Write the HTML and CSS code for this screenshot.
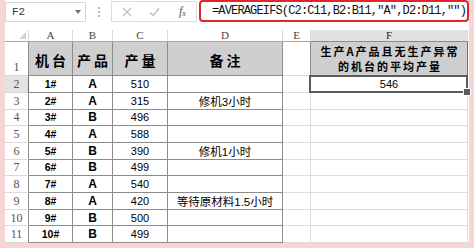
FILE: index.html
```html
<!DOCTYPE html>
<html lang="zh">
<head>
<meta charset="utf-8">
<title>AVERAGEIFS</title>
<link rel="stylesheet" href="styles.css">
</head>
<body>
<div class="app">
  <div class="fbar">
    <div class="namebox"><span class="nb-text">F2</span><span class="nb-arrow"></span></div>
    <div class="dots"><i></i><i></i><i></i></div>
    <div class="fbtns">
      <svg class="ic-x" width="10" height="10" viewBox="0 0 10 10"><path d="M1 1 L9 9 M9 1 L1 9" stroke="#bdbdbd" stroke-width="1.2" fill="none"/></svg>
      <svg class="ic-v" width="11" height="10" viewBox="0 0 11 10"><path d="M1 5.5 L4 8.5 L10 1.5" stroke="#bdbdbd" stroke-width="1.2" fill="none"/></svg>
      <span class="fx"><i>f</i><sub>x</sub></span>
    </div>
    <div class="formula">=AVERAGEIFS(C2:C11,B2:B11,"A",D2:D11,"")</div>
  </div>
  <div class="sheet">
    <div class="corner"><span class="tri"></span></div>
    <div class="ch">A</div><div class="ch">B</div><div class="ch">C</div><div class="ch">D</div><div class="ch">E</div><div class="ch sel">F</div><div class="ch end"></div>

    <div class="rh r1">1</div>
    <div class="c d hd title"><span>机台</span></div><div class="c d hd title"><span>产品</span></div><div class="c d hd title"><span>产量</span></div><div class="c d hd title"><span>备注</span></div>
    <div class="c pre"></div><div class="c fk hd ftitle">生产A产品且无生产异常<br>的机台的平均产量</div><div class="endc"></div>

    <div class="rh sel">2</div>
    <div class="c d mach">1#</div><div class="c d prod">A</div><div class="c d num">510</div><div class="c d note"></div>
    <div class="c pre"></div><div class="c fk num fsel">546</div><div class="endc"></div>

    <div class="rh">3</div>
    <div class="c d mach">2#</div><div class="c d prod">A</div><div class="c d num">315</div><div class="c d note">修机3小时</div>
    <div class="c"></div><div class="c"></div><div class="endc"></div>

    <div class="rh">4</div>
    <div class="c d mach">3#</div><div class="c d prod">B</div><div class="c d num">496</div><div class="c d note"></div>
    <div class="c"></div><div class="c"></div><div class="endc"></div>

    <div class="rh">5</div>
    <div class="c d mach">4#</div><div class="c d prod">A</div><div class="c d num">588</div><div class="c d note"></div>
    <div class="c"></div><div class="c"></div><div class="endc"></div>

    <div class="rh">6</div>
    <div class="c d mach">5#</div><div class="c d prod">B</div><div class="c d num">390</div><div class="c d note">修机1小时</div>
    <div class="c"></div><div class="c"></div><div class="endc"></div>

    <div class="rh">7</div>
    <div class="c d mach">6#</div><div class="c d prod">B</div><div class="c d num">499</div><div class="c d note"></div>
    <div class="c"></div><div class="c"></div><div class="endc"></div>

    <div class="rh">8</div>
    <div class="c d mach">7#</div><div class="c d prod">A</div><div class="c d num">540</div><div class="c d note"></div>
    <div class="c"></div><div class="c"></div><div class="endc"></div>

    <div class="rh">9</div>
    <div class="c d mach">8#</div><div class="c d prod">A</div><div class="c d num">420</div><div class="c d note">等待原材料1.5小时</div>
    <div class="c"></div><div class="c"></div><div class="endc"></div>

    <div class="rh">10</div>
    <div class="c d mach">9#</div><div class="c d prod">B</div><div class="c d num">500</div><div class="c d note"></div>
    <div class="c"></div><div class="c"></div><div class="endc"></div>

    <div class="rh">11</div>
    <div class="c d mach">10#</div><div class="c d prod">B</div><div class="c d num">499</div><div class="c d note"></div>
    <div class="c"></div><div class="c"></div><div class="endc"></div>
  </div>
</div>
</body>
</html>
```

FILE: styles.css
```css
* { box-sizing: border-box; margin: 0; padding: 0; }
html, body { background: #f6d5d5; }
body { width: 474px; height: 248px; overflow: hidden; }

.app {
  margin-left: 5px;
  width: 464px;
  height: 243px;
  background: #fff;
  display: flex;
  flex-direction: column;
}

/* formula bar */
.fbar {
  display: flex;
  align-items: flex-start;
  height: 30px;
  flex: none;
}
.namebox {
  margin-top: 2px;
  width: 81px;
  height: 20px;
  border: 1px solid #d6d6d6;
  display: flex;
  align-items: center;
  justify-content: space-between;
  padding: 0 4px 0 6px;
}
.nb-text { font: 11px "Liberation Mono", monospace; color: #333; }
.nb-arrow {
  width: 0; height: 0;
  border-left: 3px solid transparent;
  border-right: 3px solid transparent;
  border-top: 4px solid #707070;
}
.dots {
  width: 25px;
  height: 24px;
  display: flex;
  flex-direction: column;
  align-items: center;
  justify-content: center;
  gap: 2px;
}
.dots i { display: block; width: 2px; height: 2px; background: #b4b4b4; }
.fbtns {
  margin-top: 1px;
  width: 86px;
  height: 21px;
  border: 1px solid #dedede;
  display: flex;
  align-items: center;
  padding-left: 10px;
}
.ic-v { margin-left: 17px; }
.fx {
  margin-left: 19px;
  font: italic 12px "Liberation Serif", serif;
  color: #555;
}
.fx i { font-style: italic; }
.fx sub { font-size: 8px; vertical-align: -1px; }
.formula {
  margin-left: 2px;
  width: 270px;
  height: 22px;
  border: 2px solid #e2252b;
  border-radius: 4px;
  font: 12px "Liberation Mono", monospace;
  letter-spacing: -0.85px;
  color: #111;
  padding-left: 11px;
  display: flex;
  align-items: center;
  white-space: nowrap;
}

/* sheet */
.sheet {
  display: grid;
  grid-template-columns: 24px 44px 40px 55px 115px 28px 157px 1fr;
  grid-template-rows: 12px 34px repeat(10, 1fr);
  height: 213px;
}
.corner {
  position: relative;
  border-right: 1px solid #d8d8d8;
  border-bottom: 1px solid #a8a8a8;
}
.tri {
  position: absolute;
  right: 2px;
  bottom: 2px;
  width: 0; height: 0;
  border-left: 7px solid transparent;
  border-bottom: 7px solid #d2d2d2;
}
.ch {
  font: 11px "Liberation Serif", serif;
  color: #444;
  display: flex;
  align-items: center;
  justify-content: center;
  border-right: 1px solid #dadada;
  border-bottom: 1px solid #a8a8a8;
  line-height: 1;
}
.ch.sel { background: #e2e2e2; border-bottom: 1px solid #8a8a8a; color: #222; }
.ch.end { border-right: none; }

.rh {
  font: 12px "Liberation Serif", serif;
  color: #555;
  display: flex;
  align-items: center;
  justify-content: center;
  border-right: 1px solid #8c8c8c;
  border-bottom: 1px solid #dadada;
  line-height: 1;
}
.rh.r1 { align-items: flex-end; padding-bottom: 2px; }
.rh.sel { background: #e2e2e2; border-right-color: #6a6a6a; }

.c {
  display: flex;
  align-items: center;
  justify-content: center;
  border-right: 1px solid #dcdcdc;
  border-bottom: 1px solid #dcdcdc;
  color: #000;
  white-space: nowrap;
  line-height: 1;
}
.c.d { border-right-color: #8c8c8c; border-bottom-color: #8c8c8c; }
.c.pre { border-right-color: #8c8c8c; }
.c.fk { border-right-color: #707070; border-bottom-color: #707070; }
.c.hd { background: #cfcfcf; }
.endc { background: #fff; }

.title {
  font: 700 14px "Noto Sans CJK SC", sans-serif;
  letter-spacing: 3px;
  padding-left: 3px;
  padding-top: 3px;
}
.ftitle {
  font: 700 11px "Noto Sans CJK SC", sans-serif;
  letter-spacing: 2px;
  line-height: 15px;
  text-align: center;
  padding-left: 2px;
  padding-top: 1px;
}
.mach { font: 700 10.5px "Liberation Sans", sans-serif; }
.prod { font: 700 12px "Liberation Sans", sans-serif; }
.num { font: 11px "Liberation Sans", sans-serif; }
.note { font: 11.5px "Liberation Sans", "Noto Sans CJK SC", sans-serif; }

.fsel { position: relative; }
.fsel::after {
  content: "";
  position: absolute;
  left: -2px; top: -1px; right: -1px; bottom: -1px;
  border: 2px solid #5c5c5c;
}
.fsel::before {
  content: "";
  position: absolute;
  right: -4px; bottom: -4px;
  width: 6px; height: 6px;
  background: #5c5c5c;
  border: 1px solid #fff;
  z-index: 2;
}
```
